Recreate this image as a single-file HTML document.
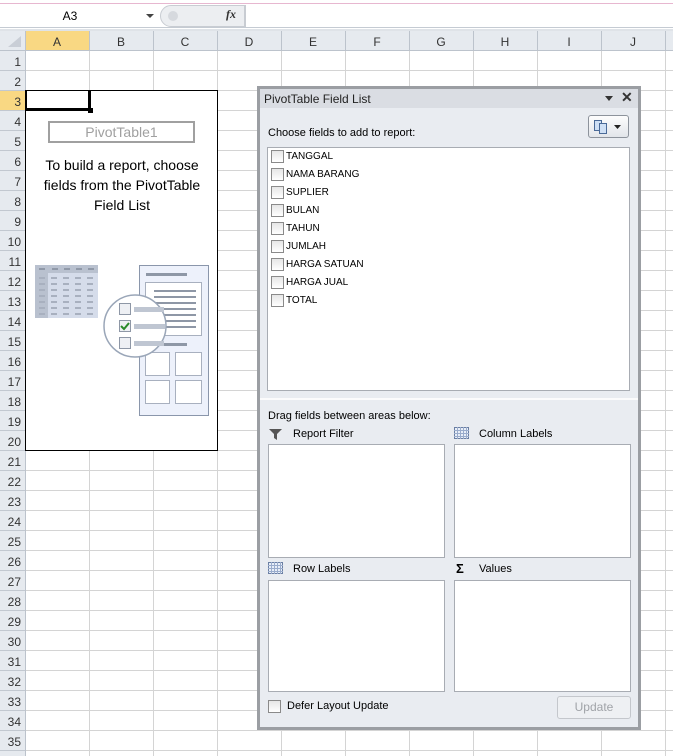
<!DOCTYPE html><html><head><style>
*{margin:0;padding:0;box-sizing:border-box}
body{width:673px;height:756px;overflow:hidden;background:#fff;font-family:"Liberation Sans",Arial,sans-serif;position:relative}
.a{position:absolute}
.t{font-size:11px;color:#000}
.cb{position:absolute;width:11px;height:11px;border:1px solid #8a8a8a;background:linear-gradient(#e6e6e6,#fff)}
</style></head><body>
<div class="a" style="left:0;top:0;width:673px;height:4px;background:#fff;border-bottom:1px solid #e7b7d0"></div>
<div class="a" style="left:0;top:4px;width:673px;height:24px;background:#fff;border-bottom:1px solid #c5cbd3"></div>
<div class="a" style="left:0;top:5px;width:160px;height:22px;font-size:12px;text-align:center;line-height:22px;padding-right:20px">A3</div>
<div class="a" style="left:146px;top:14px;border-left:4px solid transparent;border-right:4px solid transparent;border-top:4px solid #444"></div>
<div class="a" style="left:160px;top:5px;width:85px;height:22px;background:#eceef1;border-radius:11px 0 0 11px;border:1px solid #c8ccd2"></div>
<div class="a" style="left:168px;top:11px;width:10px;height:10px;border-radius:5px;background:#d6d9de"></div>
<div class="a" style="left:226px;top:7px;font:italic bold 12px 'Liberation Serif',serif;color:#333">fx</div>
<div class="a" style="left:245px;top:5px;width:1px;height:22px;background:#c8ccd2"></div>
<div class="a" style="left:0;top:29px;width:673px;height:2px;background:#dfe3e8"></div>
<svg class="a" style="left:0;top:31px" width="673" height="725">
<rect x="0" y="0" width="673" height="20" fill="#e6eaef"/>
<rect x="0" y="0" width="25" height="725" fill="#e6eaef"/>
<rect x="26" y="0" width="63" height="20" fill="#f9d883"/>
<rect x="0" y="60" width="25" height="20" fill="#f9d883"/>
<polygon points="8,16 21,16 21,5" fill="#c9ced6"/>
<g stroke="#d4d4d4" stroke-width="1">
<line x1="25.5" y1="20" x2="25.5" y2="725"/>
<line x1="89.5" y1="20" x2="89.5" y2="725"/><line x1="153.5" y1="20" x2="153.5" y2="725"/><line x1="217.5" y1="20" x2="217.5" y2="725"/><line x1="281.5" y1="20" x2="281.5" y2="725"/><line x1="345.5" y1="20" x2="345.5" y2="725"/><line x1="409.5" y1="20" x2="409.5" y2="725"/><line x1="473.5" y1="20" x2="473.5" y2="725"/><line x1="537.5" y1="20" x2="537.5" y2="725"/><line x1="601.5" y1="20" x2="601.5" y2="725"/><line x1="665.5" y1="20" x2="665.5" y2="725"/>
</g>
<g stroke="#bcc3cc"><line x1="89.5" y1="0" x2="89.5" y2="20"/><line x1="153.5" y1="0" x2="153.5" y2="20"/><line x1="217.5" y1="0" x2="217.5" y2="20"/><line x1="281.5" y1="0" x2="281.5" y2="20"/><line x1="345.5" y1="0" x2="345.5" y2="20"/><line x1="409.5" y1="0" x2="409.5" y2="20"/><line x1="473.5" y1="0" x2="473.5" y2="20"/><line x1="537.5" y1="0" x2="537.5" y2="20"/><line x1="601.5" y1="0" x2="601.5" y2="20"/><line x1="665.5" y1="0" x2="665.5" y2="20"/><line x1="0" y1="19.5" x2="673" y2="19.5"/><line x1="25.5" y1="0" x2="25.5" y2="725"/></g>
<g id="rows"></g>
<g font-family="Liberation Sans" font-size="12" fill="#333" text-anchor="middle">
<text x="57" y="15">A</text><text x="121" y="15">B</text><text x="185" y="15">C</text><text x="249" y="15">D</text><text x="313" y="15">E</text><text x="377" y="15">F</text><text x="441" y="15">G</text><text x="505" y="15">H</text><text x="569" y="15">I</text><text x="633" y="15">J</text>
</g>
<g id="rl" font-family="Liberation Sans" font-size="12" fill="#333" text-anchor="end"></g>
</svg>
<script>
var g=document.getElementById('rows'),r=document.getElementById('rl'),s='',t='';
for(var i=1;i<=35;i++){var y=20+i*20-0.5;s+='<line x1="26" y1="'+y+'" x2="673" y2="'+y+'" stroke="#d4d4d4"/><line x1="0" y1="'+y+'" x2="25" y2="'+y+'" stroke="#c2c8d0"/>';t+='<text x="21" y="'+(20+i*20-5)+'">'+i+'</text>';}
g.innerHTML=s;r.innerHTML=t;
</script>
<div class="a" style="left:25px;top:90px;width:193px;height:361px;background:#fff;border:1px solid #000"></div>
<div class="a" style="left:26px;top:90px;width:65px;height:21px;border:3px solid #000;border-top-width:1px;border-left-width:1px"></div>
<div class="a" style="left:88px;top:108px;width:5px;height:5px;background:#000"></div>
<div class="a" style="left:48px;top:121px;width:147px;height:22px;border:2px solid #a0a0a0;font-size:14px;color:#a0a0a0;text-align:center;line-height:18px">PivotTable1</div>
<div class="a" style="left:26px;top:155px;width:192px;font-size:14px;line-height:20px;text-align:center;color:#000">To build a report, choose<br>fields from the PivotTable<br>Field List</div>
<svg class="a" style="left:20px;top:250px" width="200" height="170">
<rect x="15" y="15" width="63" height="53" fill="#d5dcea"/><rect x="15" y="15" width="63" height="8" fill="#b9c1cf"/><rect x="15" y="15" width="13" height="53" fill="#b9c1cf"/>
<g stroke="#9099a8" stroke-width="2"><line x1="19" y1="19" x2="25" y2="19"/><line x1="32" y1="19" x2="38" y2="19"/><line x1="44" y1="19" x2="50" y2="19"/><line x1="56" y1="19" x2="62" y2="19"/><line x1="68" y1="19" x2="74" y2="19"/></g>
<g stroke="#a8b0bf" stroke-width="2" stroke-dasharray="6,6"><line x1="19" y1="28" x2="75" y2="28"/><line x1="19" y1="34" x2="75" y2="34"/><line x1="19" y1="40" x2="75" y2="40"/><line x1="19" y1="46" x2="75" y2="46"/><line x1="19" y1="52" x2="75" y2="52"/><line x1="19" y1="58" x2="75" y2="58"/><line x1="19" y1="64" x2="75" y2="64"/></g>
<rect x="119.5" y="15.5" width="69" height="150" fill="#edf1fb" stroke="#8a96ab"/>
<rect x="126" y="23" width="41" height="3" fill="#8e97a6"/>
<rect x="125.5" y="32.5" width="56" height="53" fill="#fff" stroke="#a8b0bf"/>
<g stroke="#8e97a6" stroke-width="2"><line x1="134" y1="41" x2="176" y2="41"/><line x1="134" y1="47" x2="176" y2="47"/><line x1="134" y1="53" x2="176" y2="53"/><line x1="134" y1="59" x2="176" y2="59"/><line x1="134" y1="65" x2="176" y2="65"/><line x1="134" y1="71" x2="176" y2="71"/><line x1="134" y1="77" x2="176" y2="77"/></g>
<rect x="126" y="93" width="41" height="3" fill="#8e97a6"/>
<rect x="125.5" y="102.5" width="24" height="23" fill="#fff" stroke="#a8b0bf"/><rect x="155.5" y="102.5" width="26" height="23" fill="#fff" stroke="#a8b0bf"/>
<rect x="125.5" y="130.5" width="24" height="23" fill="#fff" stroke="#a8b0bf"/><rect x="155.5" y="130.5" width="26" height="23" fill="#fff" stroke="#a8b0bf"/>
<circle cx="115" cy="76" r="31" fill="#fff" stroke="#9aa6b8" stroke-width="1.5"/>
<rect x="99.5" y="53.5" width="11" height="11" fill="#eef0f4" stroke="#8e97a6"/><rect x="114" y="57" width="30" height="5" fill="#bfc6d2"/>
<rect x="99.5" y="70.5" width="11" height="11" fill="#eef0f4" stroke="#8e97a6"/><path d="M101 76l3 3 5-6" stroke="#2a8a2a" stroke-width="2" fill="none"/><rect x="114" y="74" width="31" height="5" fill="#bfc6d2"/>
<rect x="99.5" y="87.5" width="11" height="11" fill="#eef0f4" stroke="#8e97a6"/><rect x="114" y="91" width="30" height="5" fill="#bfc6d2"/>
</svg>
<div class="a" style="left:257px;top:86px;width:384px;height:644px;background:#e9ecf1;border:3px solid #9b9ea3"></div>
<div class="a" style="left:260px;top:89px;width:378px;height:19px;background:#dadde3"></div>
<div class="a t" style="left:264px;top:92px;font-size:12px;color:#222">PivotTable Field List</div>
<div class="a" style="left:605px;top:96px;border-left:4px solid transparent;border-right:4px solid transparent;border-top:5px solid #333"></div>
<div class="a" style="left:621px;top:89px;font-size:14px;font-weight:bold;color:#333">✕</div>
<div class="a t" style="left:268px;top:127px;font-size:11px">Choose fields to add to report:</div>
<div class="a" style="left:588px;top:115px;width:41px;height:23px;border:1px solid #8d939c;border-radius:3px;background:linear-gradient(#fdfdfd,#e2e5ea)"></div>
<svg class="a" style="left:593px;top:119px" width="32" height="16"><rect x="1.5" y="1.5" width="7" height="10" fill="#cfe0f5" stroke="#4a6a98"/><rect x="6.5" y="4.5" width="7" height="10" fill="#cfe0f5" stroke="#4a6a98"/><path d="M21 6h7l-3.5 4z" fill="#222"/></svg>
<div class="a" style="left:267px;top:147px;width:363px;height:244px;background:#fff;border:1px solid #a8acb3"></div>
<div id="fl"></div>
<script>
var f=['TANGGAL','NAMA BARANG','SUPLIER','BULAN','TAHUN','JUMLAH','HARGA SATUAN','HARGA JUAL','TOTAL'],h='';
f.forEach(function(n,i){var y=150+i*18;h+='<div class="cb" style="left:271px;top:'+y+'px;width:13px;height:13px"></div><div class="a t" style="left:286px;top:'+(y+1)+'px;font-size:10px">'+n+'</div>';});
document.getElementById('fl').innerHTML=h;
</script>
<div class="a" style="left:260px;top:398px;width:378px;height:2px;background:#fff;opacity:.8"></div>
<div class="a t" style="left:268px;top:410px;font-size:11px">Drag fields between areas below:</div>
<svg class="a" style="left:268px;top:427px" width="16" height="14"><path d="M1 2h13l-5 5v6l-3-2v-4z" fill="#555"/></svg>
<div class="a t" style="left:293px;top:428px;font-size:11px">Report Filter</div>
<svg class="a" style="left:454px;top:427px" width="16" height="13"><rect x=".5" y=".5" width="14" height="11" fill="#e8eef8" stroke="#6b7fa3"/><path d="M0 3.5h15M0 6.5h15M0 9.5h15M3.5 0v12M6.5 0v12M9.5 0v12M12.5 0v12" stroke="#9aaccc"/></svg>
<div class="a t" style="left:479px;top:428px;font-size:11px">Column Labels</div>
<div class="a" style="left:268px;top:444px;width:177px;height:114px;background:#fff;border:1px solid #a8acb3"></div>
<div class="a" style="left:454px;top:444px;width:177px;height:114px;background:#fff;border:1px solid #a8acb3"></div>
<svg class="a" style="left:268px;top:562px" width="16" height="13"><rect x=".5" y=".5" width="14" height="11" fill="#e8eef8" stroke="#6b7fa3"/><path d="M0 3.5h15M0 6.5h15M0 9.5h15M3.5 0v12M6.5 0v12M9.5 0v12M12.5 0v12" stroke="#9aaccc"/></svg>
<div class="a t" style="left:293px;top:563px;font-size:11px">Row Labels</div>
<div class="a" style="left:456px;top:561px;font-size:13px;font-weight:bold">Σ</div>
<div class="a t" style="left:479px;top:563px;font-size:11px">Values</div>
<div class="a" style="left:268px;top:580px;width:177px;height:112px;background:#fff;border:1px solid #a8acb3"></div>
<div class="a" style="left:454px;top:580px;width:177px;height:112px;background:#fff;border:1px solid #a8acb3"></div>
<div class="cb" style="left:268px;top:700px;width:13px;height:13px"></div>
<div class="a t" style="left:287px;top:700px;font-size:11px">Defer Layout Update</div>
<div class="a" style="left:557px;top:696px;width:74px;height:23px;border:1px solid #c4c7cc;border-radius:3px;background:#eef0f3;font-size:12px;color:#a0a3a8;text-align:center;line-height:21px">Update</div>
</body></html>
